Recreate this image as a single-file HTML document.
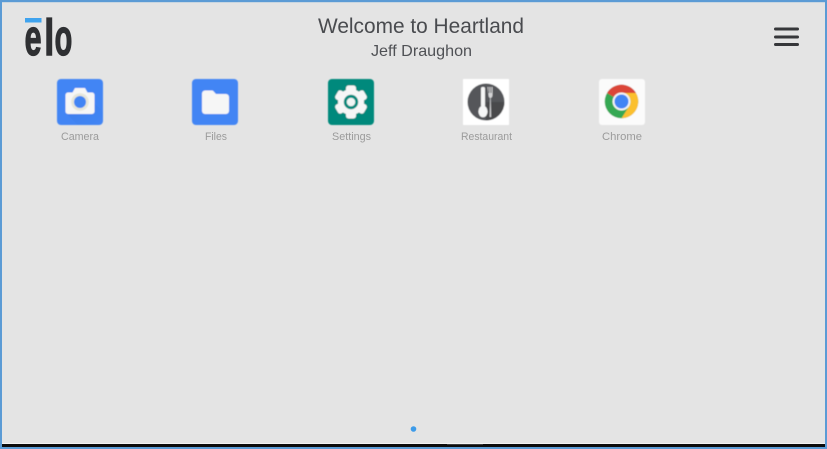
<!DOCTYPE html>
<html>
<head>
<meta charset="utf-8">
<style>
html,body{margin:0;padding:0;background:#e4e4e4}
svg{display:block}
text{font-family:"Liberation Sans",sans-serif}
</style>
</head>
<body>
<svg width="827" height="449" viewBox="0 0 827 449" xmlns="http://www.w3.org/2000/svg">
<defs>
<filter id="b" x="-5%" y="-5%" width="110%" height="110%"><feGaussianBlur stdDeviation="0.45"/></filter>
<filter id="t" x="-5%" y="-20%" width="110%" height="140%"><feGaussianBlur stdDeviation="0.25"/></filter>
<linearGradient id="sh" x1="0" y1="0" x2="1" y2="1"><stop offset="0" stop-color="#2f63c4" stop-opacity=".4"/><stop offset="1" stop-color="#4285f4" stop-opacity="0"/></linearGradient>
</defs>
<rect width="827" height="449" fill="#e4e4e4"/>
<!-- bottom bar -->
<rect x="0" y="443" width="827" height="1" fill="#f4f4f4"/>
<rect x="0" y="444" width="827" height="3" fill="#0c0c0c"/>
<rect x="447" y="444" width="36" height="1" fill="#3a3a3a"/>
<!-- frame -->
<rect x="0" y="0" width="827" height="2.2" fill="#5b9bd5"/>
<rect x="0" y="0" width="2" height="449" fill="#5b9bd5"/>
<rect x="825" y="0" width="2" height="449" fill="#5b9bd5"/>
<rect x="0" y="447" width="827" height="2" fill="#5b9bd5"/>

<!-- logo -->
<rect x="25" y="18" width="16.5" height="4.5" fill="#3fa3ee"/>
<g font-size="38" font-weight="700" fill="#2f3033" stroke="#2f3033" stroke-width="1">
<text transform="translate(24.6,55) scale(.8,1.35)">e</text>
<text transform="translate(44.3,55) scale(.95,1.35)">l</text>
<text transform="translate(54.6,55) scale(.76,1.35)">o</text>
</g>

<!-- header -->
<g filter="url(#t)">
<text x="318" y="33" font-size="21" fill="#4a4b4f" textLength="206" lengthAdjust="spacingAndGlyphs">Welcome to Heartland</text>
<text x="371" y="56" font-size="16" fill="#505155" textLength="101" lengthAdjust="spacingAndGlyphs">Jeff Draughon</text>
</g>

<!-- hamburger -->
<g fill="#36373a">
<rect x="774" y="27.500" width="25" height="3" rx="1.5"/>
<rect x="774" y="35.500" width="25" height="3" rx="1.5"/>
<rect x="774" y="43" width="25" height="3" rx="1.5"/>
</g>

<g filter="url(#b)">
<!-- camera -->
<rect x="57" y="79" width="46" height="46" rx="4" fill="#4285f4"/>
<path d="M66 113 L91 100 L103 112 V121 a4 4 0 0 1 -4 4 H78 Z" fill="url(#sh)"/>
<path d="M68 92.500 H72.500 L75 88 H85 L87.500 92.500 H92 a2.500 2.500 0 0 1 2.500 2.500 V111.500 a2.500 2.500 0 0 1 -2.500 2.500 H68 a2.500 2.500 0 0 1 -2.500 -2.500 V95 a2.500 2.500 0 0 1 2.500 -2.500 Z" fill="#f6f6f6"/>
<circle cx="80" cy="102" r="8.800" fill="#e6e6da"/>
<circle cx="80" cy="102" r="6" fill="#4285f4"/>

<!-- files -->
<rect x="192" y="79" width="46" height="46" rx="4" fill="#4285f4"/>
<path d="M205 90.500 H212 a2 2 0 0 1 1.500 .7 L216 94 H226 a3 3 0 0 1 3 3 V111 a3 3 0 0 1 -3 3 H205 a3 3 0 0 1 -3 -3 V93.500 a3 3 0 0 1 3 -3 Z" fill="#f6f6f6"/>

<!-- settings -->
<rect x="328" y="79" width="46" height="46" rx="4" fill="#00897b"/>
<g fill="#f6f6f6">
<circle cx="351" cy="102" r="13"/>
<rect x="346" y="85.500" width="10" height="33" rx="2.500"/>
<rect x="346" y="85.500" width="10" height="33" rx="2.500" transform="rotate(60 351 102)"/>
<rect x="346" y="85.500" width="10" height="33" rx="2.500" transform="rotate(120 351 102)"/>
</g>
<circle cx="351" cy="102" r="7.200" fill="#00897b"/>
<circle cx="351" cy="102" r="4.300" fill="#f0f5f4"/>

<!-- restaurant -->
<rect x="463" y="79" width="46" height="46" fill="#fff"/>
<circle cx="486" cy="102" r="18.500" fill="#55565a"/>
<path d="M486.500 102 L504.500 102 A18.500 18.500 0 0 1 486 120.500 Z" fill="#48494c"/>
<rect x="481" y="87" width="4" height="20" rx="1.500" fill="#f6f6f6"/>
<ellipse cx="483" cy="111.500" rx="4.600" ry="5.800" fill="#f6f6f6"/>
<path d="M487.500 87 h1 v6 h1 v-6 h1 v6 h1 v-6 h1 V95 q0 2.500 -1.800 3 l.5 19 h-1.600 l.5 -19 q-1.600 -.5 -1.600 -3 Z" fill="#d4d4d6"/>

<!-- chrome -->
<rect x="599" y="79" width="46" height="46" rx="3" fill="#fbfbfb"/>
<circle cx="621.500" cy="101.500" r="16.800" fill="#34a853"/>
<path d="M607 93 A16.800 16.800 0 0 1 636 93 H621.500 A9 9 0 0 0 613.700 97 Z" fill="#db4437"/>
<path d="M636 93 A16.800 16.800 0 0 1 621.500 118.300 L629.300 106 A9 9 0 0 0 629 96.500 L621.500 93 Z" fill="#fbc02d"/>
<circle cx="621.500" cy="101.500" r="9" fill="#f4f4f4"/>
<circle cx="621.500" cy="101.500" r="7" fill="#4285f4"/>
</g>

<!-- labels -->
<g font-size="11" fill="#9b9b9b" filter="url(#t)">
<text x="61" y="140" textLength="38" lengthAdjust="spacingAndGlyphs">Camera</text>
<text x="205" y="140" textLength="22" lengthAdjust="spacingAndGlyphs">Files</text>
<text x="332" y="140" textLength="39" lengthAdjust="spacingAndGlyphs">Settings</text>
<text x="461" y="140" textLength="51" lengthAdjust="spacingAndGlyphs">Restaurant</text>
<text x="602" y="140" textLength="40" lengthAdjust="spacingAndGlyphs">Chrome</text>
</g>

<!-- page dot -->
<circle cx="413.500" cy="429" r="2.800" fill="#3d9be9"/>
</svg>
</body>
</html>
